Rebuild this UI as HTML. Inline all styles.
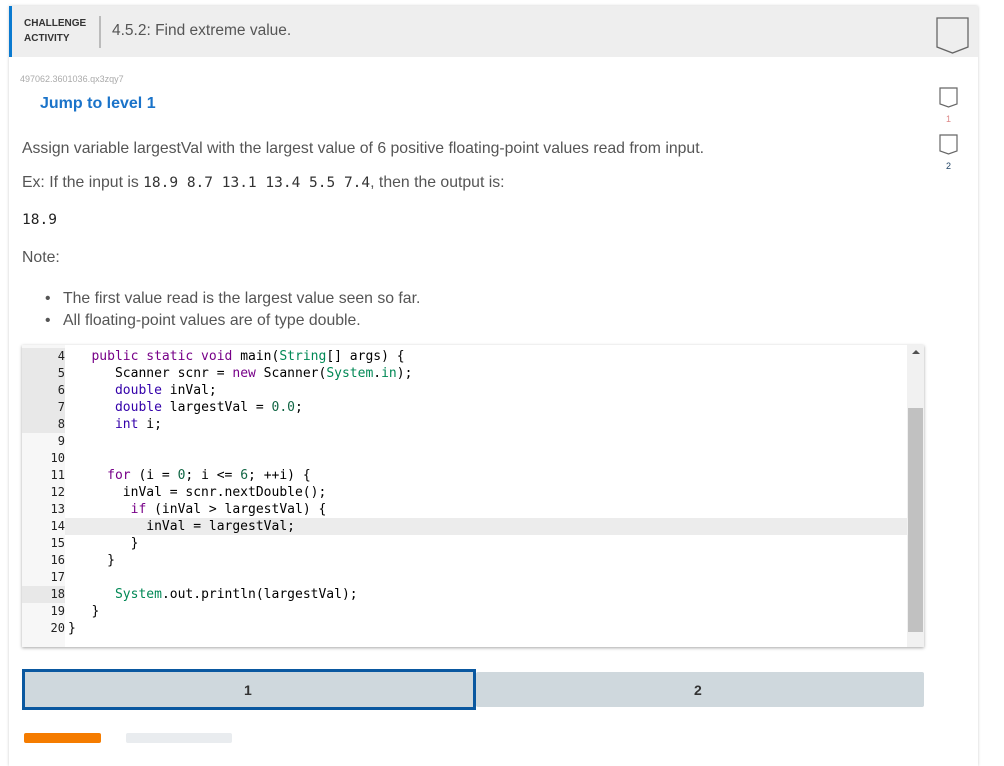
<!DOCTYPE html>
<html><head><meta charset="utf-8"><style>
body{margin:0;width:1004px;height:739px;overflow:hidden;background:#fff;font-family:"Liberation Sans",sans-serif;position:relative}
.card{position:absolute;left:9px;top:6px;width:969px;height:760px;background:#fff;box-shadow:0 0 3px rgba(0,0,0,.2)}
.hdr{position:absolute;left:0;top:0;width:969px;height:51px;background:#eee;border-left:3px solid #0a7ad0;box-sizing:border-box}
.abs{position:absolute}
.t{color:#555;font-size:15.8px;white-space:nowrap}
.code{position:absolute;left:22px;top:345px;width:902px;height:302px;background:#fff;box-shadow:0 1px 3px rgba(0,0,0,.35)}
.ln{font-family:"DejaVu Sans Mono",monospace;font-size:13px;line-height:17px;white-space:pre;color:#000}
.g{position:absolute;left:0;width:43px;text-align:right;color:#222;font-family:"DejaVu Sans Mono",monospace;font-size:12px;line-height:17px}
.k{color:#708}.ty{color:#30a}.n{color:#164}.s{color:#085}
.m{font-family:"DejaVu Sans Mono",monospace;font-size:14.5px;color:#333}
</style></head><body>
<div class="card">
 <div class="hdr">
  <div class="abs" style="left:12px;top:10px;font-size:10px;font-weight:bold;color:#333;line-height:15px">CHALLENGE<br>ACTIVITY</div>
  <div class="abs" style="left:87px;top:10px;width:2px;height:32px;background:#bbb"></div>
  <div class="abs" style="left:100px;top:16px;font-size:15.5px;color:#555">4.5.2: Find extreme value.</div>
 </div>
 <svg class="abs" style="left:927px;top:11px" width="34" height="38"><path d="M1 1H32V30L16.5 36L1 30Z" fill="none" stroke="#666" stroke-width="1.3"/></svg>
 <svg class="abs" style="left:930px;top:81px" width="20" height="22"><path d="M1 1H18V17L9.5 20L1 17Z" fill="none" stroke="#666" stroke-width="1.2"/></svg>
 <div class="abs" style="left:937px;top:108px;font-size:9px;color:#d88">1</div>
 <svg class="abs" style="left:930px;top:128px" width="20" height="22"><path d="M1 1H18V17L9.5 20L1 17Z" fill="none" stroke="#666" stroke-width="1.2"/></svg>
 <div class="abs" style="left:937px;top:155px;font-size:9px;color:#246">2</div>
</div>
<div class="abs" style="left:20px;top:74px;font-size:9px;color:#aaa">497062.3601036.qx3zqy7</div>
<div class="abs" style="left:40px;top:95px;font-size:16px;font-weight:bold;color:#1a73c9">Jump to level 1</div>
<div class="abs t" style="left:22px;top:140px">Assign variable largestVal with the largest value of 6 positive floating-point values read from input.</div>
<div class="abs t" style="left:22px;top:174px">Ex: If the input is <span class="m">18.9 8.7 13.1 13.4 5.5 7.4</span>, then the output is:</div>
<div class="abs m" style="left:22px;top:212px;color:#222">18.9</div>
<div class="abs t" style="left:22px;top:249px">Note:</div>
<div class="abs t" style="left:45px;top:288px;line-height:22px"><span style="display:inline-block;width:18px">•</span>The first value read is the largest value seen so far.<br><span style="display:inline-block;width:18px">•</span>All floating-point values are of type double.</div>
<div class="code">
 <div class="abs" style="left:0;top:0;width:43px;height:302px;background:#f7f7f7"></div>
 <div class="abs" style="left:0;top:3px;width:43px;height:85px;background:#e8e8e8"></div>
 <div class="abs" style="left:0;top:241px;width:43px;height:17px;background:#e8e8e8"></div>
 <div class="abs" style="left:43px;top:173px;width:842px;height:17px;background:#ececec"></div>
 <div class="abs" style="left:885px;top:0;width:17px;height:302px;background:#f1f1f1"></div>
 <div class="abs" style="left:886px;top:63px;width:15px;height:224px;background:#c1c1c1"></div>
 <div class="abs" style="left:890px;top:5px;width:0;height:0;border:4px solid transparent;border-bottom-color:#505050;border-top:0"></div>
 <div class="g" style="top:3px">4<br>5<br>6<br>7<br>8<br>9<br>10<br>11<br>12<br>13<br>14<br>15<br>16<br>17<br>18<br>19<br>20</div>
 <div class="abs ln" style="left:46px;top:3px">   <span class="k">public static void</span> main(<span class="s">String</span>[] args) {
      Scanner scnr = <span class="k">new</span> Scanner(<span class="s">System</span>.<span class="s">in</span>);
      <span class="ty">double</span> inVal;
      <span class="ty">double</span> largestVal = <span class="n">0.0</span>;
      <span class="ty">int</span> i;


     <span class="k">for</span> (i = <span class="n">0</span>; i &lt;= <span class="n">6</span>; ++i) {
       inVal = scnr.nextDouble();
        <span class="k">if</span> (inVal &gt; largestVal) {
          inVal = largestVal;
        }
     }

      <span class="s">System</span>.out.println(largestVal);
   }
}</div>
</div>
<div class="abs" style="left:476px;top:672px;width:448px;height:35px;background:#cfd8dd;border-radius:2px"></div>
<div class="abs" style="left:22px;top:669px;width:448px;height:35px;background:#cfd8dd;border:3px solid #0a58a0"></div>
<div class="abs" style="left:244px;top:682px;font-size:14px;font-weight:bold;color:#333">1</div>
<div class="abs" style="left:694px;top:682px;font-size:14px;font-weight:bold;color:#333">2</div>
<div class="abs" style="left:24px;top:733px;width:77px;height:10px;background:#f57c00;border-radius:2px"></div>
<div class="abs" style="left:126px;top:733px;width:106px;height:10px;background:#e9ecef;border-radius:2px"></div>
</body></html>
